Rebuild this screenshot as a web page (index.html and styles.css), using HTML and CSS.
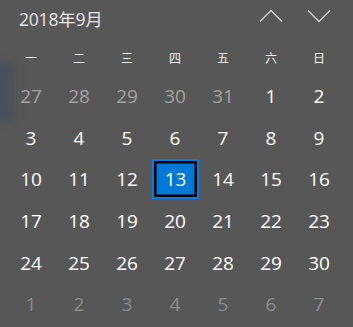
FILE: index.html
```html
<!DOCTYPE html>
<html lang="zh">
<head>
<meta charset="utf-8">
<link rel="stylesheet" href="styles.css">
</head>
<body>
<div class="blur"></div>
<div class="cal">
  <div class="head">
    <div class="title">2018年9月</div>
    <div class="navs">
      <svg class="nav" width="24" height="14" viewBox="0 0 24 14"><path d="M1 12.5 L12 1.5 L23 12.5" fill="none" stroke="#d0d0d0" stroke-width="1.4"/></svg>
      <svg class="nav" width="24" height="14" viewBox="0 0 24 14"><path d="M1 1.5 L12 12.5 L23 1.5" fill="none" stroke="#d0d0d0" stroke-width="1.4"/></svg>
    </div>
  </div>
  <div class="week">
    <span>一</span><span>二</span><span>三</span><span>四</span><span>五</span><span>六</span><span>日</span>
  </div>
  <div class="days">
    <span class="prev">27</span><span class="prev">28</span><span class="prev">29</span><span class="prev">30</span><span class="prev">31</span><span>1</span><span>2</span>
    <span>3</span><span>4</span><span>5</span><span>6</span><span>7</span><span>8</span><span>9</span>
    <span>10</span><span>11</span><span>12</span><span class="today"><b>13</b></span><span>14</span><span>15</span><span>16</span>
    <span>17</span><span>18</span><span>19</span><span>20</span><span>21</span><span>22</span><span>23</span>
    <span>24</span><span>25</span><span>26</span><span>27</span><span>28</span><span>29</span><span>30</span>
    <span class="next">1</span><span class="next">2</span><span class="next">3</span><span class="next">4</span><span class="next">5</span><span class="next">6</span><span class="next">7</span>
  </div>
</div>
</body>
</html>
```
FILE: styles.css
```css
html, body {
  margin: 0;
  padding: 0;
  background: #575757;
  overflow: hidden;
}
body {
  width: 353px;
  height: 327px;
  position: relative;
  font-family: "Open Sans", "Noto Sans CJK SC", sans-serif;
  color: #ffffff;
}
.blur {
  position: absolute;
  left: -10px;
  top: 62px;
  width: 24px;
  height: 60px;
  background: #48505a;
  filter: blur(5px);
}
.cal {
  position: relative;
  padding: 0 10px 0 7px;
}
.head {
  height: 40px;
  display: flex;
  align-items: center;
  justify-content: space-between;
}
.title {
  padding-left: 12px;
  font-size: 17.5px;
  color: #e6e6e6;
  margin-top: -4px;
  letter-spacing: -0.2px;
}
.navs {
  display: flex;
  gap: 24px;
  margin-right: 12px;
  margin-top: -8px;
}
.nav {
  display: block;
}
.week {
  display: grid;
  grid-template-columns: repeat(7, 48px);
  height: 35px;
  align-items: center;
  font-family: "Noto Sans CJK SC", sans-serif;
  font-size: 12px;
  color: #f0f0f0;
}
.week span {
  text-align: center;
  margin-top: -1px;
}
.days {
  display: grid;
  grid-template-columns: repeat(7, 48px);
  grid-auto-rows: 41.7px;
}
.days span {
  display: flex;
  align-items: center;
  justify-content: center;
  font-size: 19px;
  color: #ffffff;
}
.days .prev {
  color: #a2a2a2;
}
.days .next {
  color: #8c8c8c;
}
.days .today {
  padding: 1px 0 1px 1px;
}
.today b {
  font-weight: normal;
  width: 100%;
  height: 100%;
  box-sizing: border-box;
  display: flex;
  align-items: center;
  justify-content: center;
  background: #0078d7;
  border: 2px solid #0a7ce0;
  box-shadow: inset 0 0 0 2.5px #000;
}
```
